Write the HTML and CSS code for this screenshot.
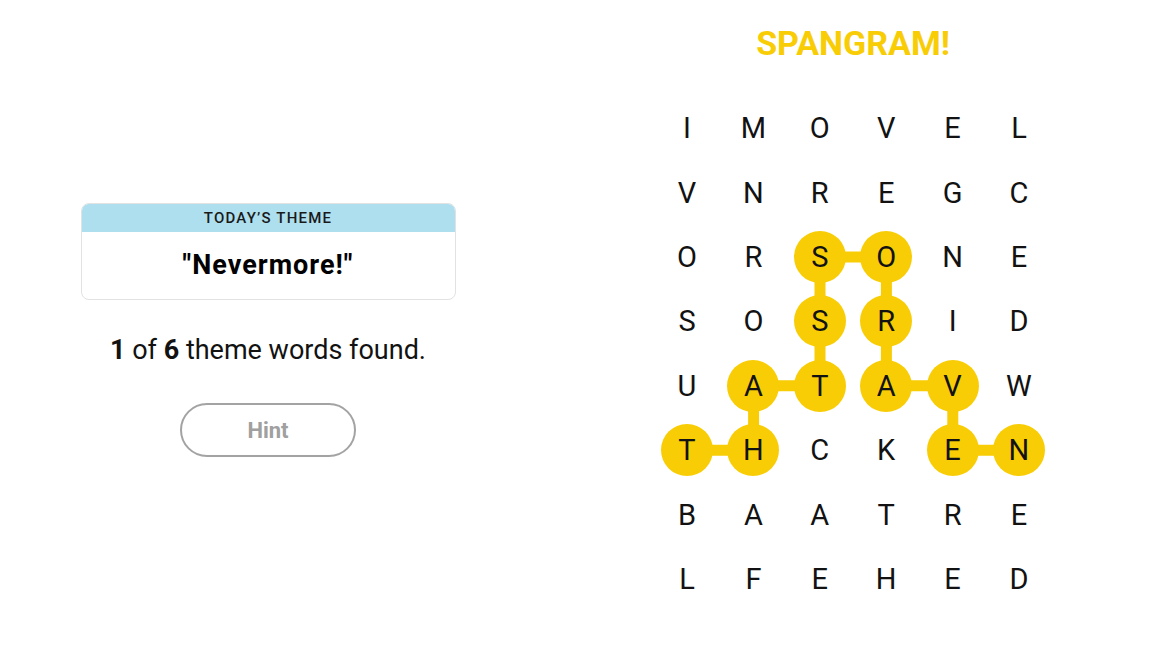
FILE: index.html
```html
<!DOCTYPE html>
<html lang="en">
<head>
<meta charset="utf-8">
<title>Strands</title>
<link rel="stylesheet" href="styles.css">
</head>
<body>
<div class="page">
  <section class="left">
    <div class="card">
      <div class="card-head">TODAY’S THEME</div>
      <div class="card-body">"Nevermore!"</div>
    </div>
    <p class="found"><b>1</b> of <b>6</b> theme words found.</p>
    <button class="hint">Hint</button>
  </section>
  <section class="right">
    <h1 class="spangram">SPANGRAM!</h1>
    <div class="board">
      <svg class="links" width="398.4" height="515.2" viewBox="0 0 398.4 515.2">
        <polyline points="33.2,354.2 99.6,354.2 99.6,289.8 166,289.8 166,225.4 166,161 232.4,161 232.4,225.4 232.4,289.8 298.8,289.8 298.8,354.2 365.2,354.2" fill="none" stroke="#f8cd05" stroke-width="11" stroke-linejoin="miter"/>
      </svg>
      <div class="cell"><span>I</span></div>
      <div class="cell"><span>M</span></div>
      <div class="cell"><span>O</span></div>
      <div class="cell"><span>V</span></div>
      <div class="cell"><span>E</span></div>
      <div class="cell"><span>L</span></div>

      <div class="cell"><span>V</span></div>
      <div class="cell"><span>N</span></div>
      <div class="cell"><span>R</span></div>
      <div class="cell"><span>E</span></div>
      <div class="cell"><span>G</span></div>
      <div class="cell"><span>C</span></div>

      <div class="cell"><span>O</span></div>
      <div class="cell"><span>R</span></div>
      <div class="cell"><span class="hl">S</span></div>
      <div class="cell"><span class="hl">O</span></div>
      <div class="cell"><span>N</span></div>
      <div class="cell"><span>E</span></div>

      <div class="cell"><span>S</span></div>
      <div class="cell"><span>O</span></div>
      <div class="cell"><span class="hl">S</span></div>
      <div class="cell"><span class="hl">R</span></div>
      <div class="cell"><span>I</span></div>
      <div class="cell"><span>D</span></div>

      <div class="cell"><span>U</span></div>
      <div class="cell"><span class="hl">A</span></div>
      <div class="cell"><span class="hl">T</span></div>
      <div class="cell"><span class="hl">A</span></div>
      <div class="cell"><span class="hl">V</span></div>
      <div class="cell"><span>W</span></div>

      <div class="cell"><span class="hl">T</span></div>
      <div class="cell"><span class="hl">H</span></div>
      <div class="cell"><span>C</span></div>
      <div class="cell"><span>K</span></div>
      <div class="cell"><span class="hl">E</span></div>
      <div class="cell"><span class="hl">N</span></div>

      <div class="cell"><span>B</span></div>
      <div class="cell"><span>A</span></div>
      <div class="cell"><span>A</span></div>
      <div class="cell"><span>T</span></div>
      <div class="cell"><span>R</span></div>
      <div class="cell"><span>E</span></div>

      <div class="cell"><span>L</span></div>
      <div class="cell"><span>F</span></div>
      <div class="cell"><span>E</span></div>
      <div class="cell"><span>H</span></div>
      <div class="cell"><span>E</span></div>
      <div class="cell"><span>D</span></div>
    </div>
  </section>
</div>
</body>
</html>
```

FILE: styles.css
```css
* { box-sizing: border-box; }

html, body {
  margin: 0;
  padding: 0;
  background: #ffffff;
}

body {
  font-family: "Roboto", "Liberation Sans", sans-serif;
  color: #121212;
}

.page {
  display: flex;
  width: 1152px;
  height: 648px;
  overflow: hidden;
}

.left {
  width: 536px;
  display: flex;
  flex-direction: column;
  align-items: center;
  padding-top: 203px;
}

.card {
  width: 375px;
  border: 1px solid #e2e2e2;
  border-radius: 8px;
  overflow: hidden;
  text-align: center;
}

.card-head {
  background: #aedfee;
  height: 28px;
  line-height: 29px;
  font-size: 15px;
  font-weight: 500;
  letter-spacing: 1.2px;
  color: #1a1a1a;
}

.card-body {
  height: 67px;
  line-height: 66px;
  font-size: 27px;
  font-weight: 700;
  letter-spacing: 1px;
  color: #000;
}

.found {
  margin: 35px 0 0;
  height: 30px;
  line-height: 30px;
  font-size: 27px;
  color: #121212;
}

.found b { font-weight: 700; }

.hint {
  margin-top: 38px;
  width: 176px;
  height: 54px;
  border: 2px solid #a3a3a3;
  border-radius: 27px;
  background: #ffffff;
  font-family: "Roboto", "Liberation Sans", sans-serif;
  font-size: 22px;
  font-weight: 700;
  color: #a0a0a0;
}

.right {
  flex: 1;
  display: flex;
  flex-direction: column;
  align-items: center;
  padding-left: 18px;
  padding-top: 23px;
}

.spangram {
  margin: 0;
  height: 40px;
  line-height: 40px;
  font-size: 34px;
  font-weight: 700;
  color: #f8cd05;
  letter-spacing: 0;
}

.board {
  position: relative;
  margin-top: 33px;
  display: grid;
  grid-template-columns: repeat(6, 66.4px);
  grid-template-rows: repeat(8, 64.4px);
}

.links {
  position: absolute;
  left: 0;
  top: 0;
}

.cell {
  position: relative;
  display: flex;
  align-items: center;
  justify-content: center;
}

.cell span {
  width: 52px;
  height: 52px;
  border-radius: 50%;
  display: flex;
  align-items: center;
  justify-content: center;
  font-size: 29px;
  font-weight: 400;
  color: #121212;
}

.cell span.hl {
  background: #f8cd05;
}
```
